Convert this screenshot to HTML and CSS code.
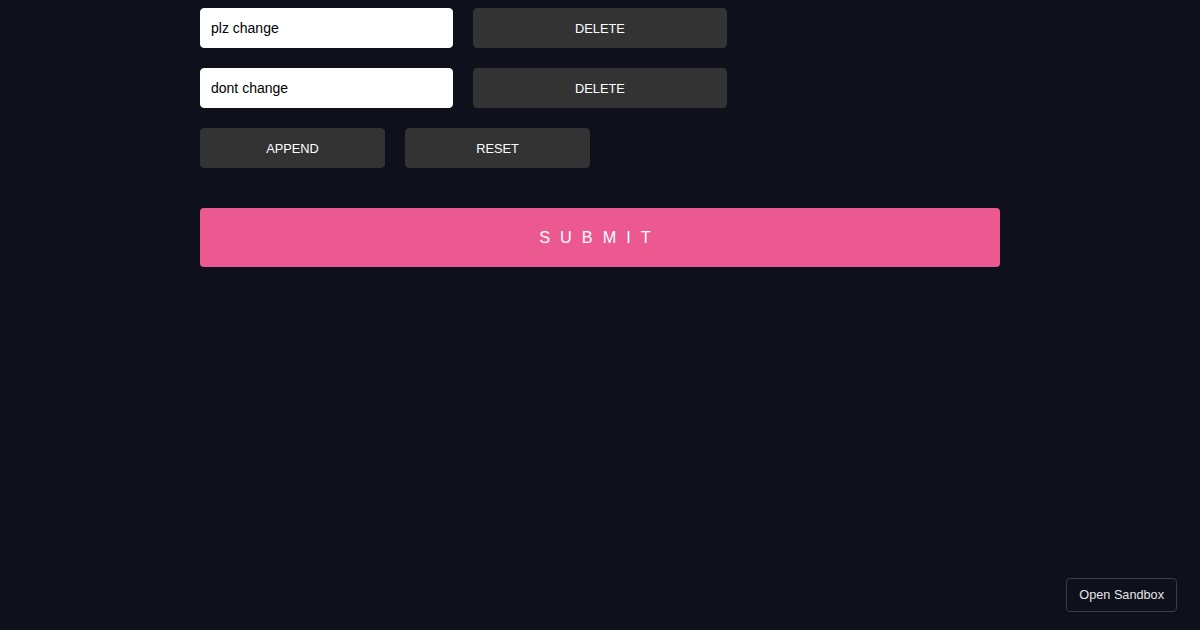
FILE: index.html
```html
<!DOCTYPE html>
<html lang="en">

<head>
  <meta charset="UTF-8" />
  <meta name="viewport" content="width=device-width, initial-scale=1.0" />
  <title>Field Array</title>
  <link rel="stylesheet" href="styles.css">
</head>

<body>
  <form class="form">
    <ul class="items">
      <li class="item">
        <input type="text" value="plz change">
        <button type="button" class="btn btn-delete">Delete</button>
      </li>
      <li class="item">
        <input type="text" value="dont change">
        <button type="button" class="btn btn-delete">Delete</button>
      </li>
    </ul>
    <div class="actions">
      <button type="button" class="btn btn-small">Append</button>
      <button type="button" class="btn btn-small">Reset</button>
    </div>
    <button type="submit" class="submit">Submit</button>
  </form>

  <button class="sandbox">Open Sandbox</button>
</body>

</html>
```

FILE: styles.css
```css
body {
  margin: 0;
  background-color: #0e101c;
  color: white;
  font-family: 'Liberation Sans', Arial, sans-serif;
  height: 100vh;
  overflow: hidden;
}

.form {
  width: 800px;
  margin: 0 auto;
  padding-top: 8px;
}

.items {
  list-style: none;
  margin: 0;
  padding: 0;
}

.item {
  display: flex;
  gap: 20px;
  margin-bottom: 20px;
}

input {
  box-sizing: border-box;
  width: 253px;
  height: 40px;
  padding: 0 10px;
  border: 1px solid white;
  border-radius: 4px;
  background: white;
  color: black;
  font-size: 14px;
  font-family: 'Liberation Sans', Arial, sans-serif;
}

.btn {
  box-sizing: border-box;
  height: 40px;
  border: 1px solid #333;
  border-radius: 4px;
  background: #333;
  color: white;
  font-size: 12.8px;
  font-family: 'Liberation Sans', Arial, sans-serif;
  text-transform: uppercase;
  cursor: pointer;
}

.btn-delete {
  width: 254px;
}

.actions {
  display: flex;
  gap: 20px;
}

.btn-small {
  width: 185px;
}

.submit {
  display: block;
  box-sizing: border-box;
  width: 100%;
  height: 59px;
  margin-top: 40px;
  padding: 0;
  border: none;
  border-radius: 4px;
  background: #ec5990;
  color: white;
  font-size: 16.3px;
  font-weight: 100;
  letter-spacing: 10px;
  text-transform: uppercase;
  font-family: 'Liberation Sans', Arial, sans-serif;
}

.sandbox {
  position: fixed;
  right: 23px;
  bottom: 18px;
  height: 34px;
  padding: 0 12px;
  border: 1px solid #3a3c48;
  border-radius: 4px;
  background: #0e101c;
  color: #e6e6e6;
  font-size: 12.7px;
  font-family: 'Liberation Sans', Arial, sans-serif;
}
```
